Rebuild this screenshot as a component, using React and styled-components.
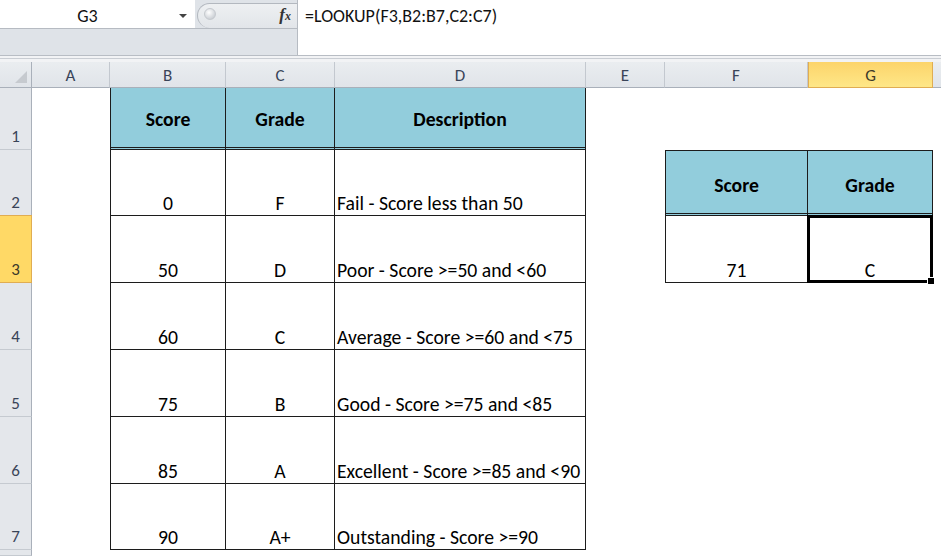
import React from "react";
import styled, { createGlobalStyle } from "styled-components";

const Global = createGlobalStyle`
  html, body { margin: 0; padding: 0; background: #fff; }
  body { font-family: "Carlito", "Lato", "Liberation Sans", sans-serif; }
`;

const FONT = `"Carlito", "Lato", "Liberation Sans", sans-serif`;

const Window = styled.div`
  width: 941px;
  height: 556px;
  overflow: hidden;
  display: flex;
  flex-direction: column;
  background: #fff;
  font-family: ${FONT};
`;

const FormulaBar = styled.div`
  display: flex;
  height: 55px;
  flex: none;
  background: #dfe3e8;
`;

const LeftPanel = styled.div`
  width: 298px;
  display: flex;
  flex-direction: column;
  border-right: 1px solid #b6bbc2;
  box-sizing: border-box;
`;

const NameRow = styled.div`
  display: flex;
  height: 29px;
  border-bottom: 1px solid #b6bbc2;
  box-sizing: border-box;
`;

const NameBox = styled.div`
  width: 195px;
  background: #fff;
  position: relative;
  display: flex;
  align-items: center;
  justify-content: center;
  font-size: 18px;
  color: #111;
  padding: 3px 20px 0 0;
  box-sizing: border-box;
`;

const DropArrow = styled.span`
  position: absolute;
  right: 8px;
  top: 14px;
  width: 0;
  height: 0;
  border-left: 4px solid transparent;
  border-right: 4px solid transparent;
  border-top: 4px solid #444;
`;

const FxArea = styled.div`
  flex: 1;
  margin: 3px 0 0 2px;
  border: 1px solid #b3b8bf;
  border-right: none;
  border-bottom: none;
  border-radius: 14px 0 0 14px;
  background: linear-gradient(#eef0f2, #e2e5e9);
  display: flex;
  align-items: center;
  justify-content: space-between;
  padding: 0 6px 0 6px;
`;

const Knob = styled.span`
  width: 10px;
  height: 10px;
  border-radius: 50%;
  margin-top: -4px;
  background: radial-gradient(circle at 40% 35%, #ffffff, #cfd3d8 70%, #b9bec5);
  border: 1px solid #c5c9ce;
`;

const Fx = styled.span`
  font-family: "Liberation Serif", "DejaVu Serif", serif;
  font-style: italic;
  font-weight: bold;
  font-size: 17px;
  color: #333;
  margin-top: -2px;
  & > small {
    font-size: 12px;
  }
`;

const GrayBand = styled.div`
  flex: 1;
`;

const FormulaInput = styled.div`
  flex: 1;
  background: #fff;
  font-size: 18px;
  color: #111;
  padding: 5px 0 0 7px;
`;

const Separator = styled.div`
  height: 7px;
  flex: none;
  background: #f2f3f5;
  border-top: 1px solid #b8bdc4;
  box-sizing: border-box;
  position: relative;
  &::after {
    content: "";
    position: absolute;
    left: 0;
    right: 0;
    top: 2px;
    height: 1px;
    background: #c9cdd3;
  }
`;

const Sheet = styled.div`
  flex: 1;
  display: grid;
  grid-template-columns: 32px 78px 116px 109px 251px 79px 143px 125px 1fr;
  grid-template-rows: 26px 62px 66px 67px 67px 67px 67px 66px 1fr;
  font-size: 19.7px;
  color: #000;
`;

const ColHead = styled.div`
  box-sizing: border-box;
  display: flex;
  align-items: center;
  justify-content: center;
  padding-top: 2px;
  font-size: 17px;
  color: ${(p) => (p.$sel ? "#3d3a2a" : "#394458")};
  background: ${(p) =>
    p.$sel
      ? "linear-gradient(#fcd46a, #fee788)"
      : "linear-gradient(#eaedf0, #e0e4e9)"};
  border-right: 1px solid ${(p) => (p.$sel ? "#e0ad52" : "#c3c8cf")};
  border-left: ${(p) => (p.$sel ? "1px solid #e0ad52" : "none")};
  border-bottom: 1px solid ${(p) => (p.$sel ? "#e0ad52" : "#a9b0ba")};
`;

const Corner = styled.div`
  box-sizing: border-box;
  background: linear-gradient(#eaedf0, #e0e4e9);
  border-right: 1px solid #a9b0ba;
  border-bottom: 1px solid #a9b0ba;
  position: relative;
  &::after {
    content: "";
    position: absolute;
    right: 4px;
    bottom: 4px;
    width: 0;
    height: 0;
    border-left: 12px solid transparent;
    border-bottom: 12px solid #c6cacf;
  }
`;

const RowHead = styled.div`
  box-sizing: border-box;
  display: flex;
  align-items: flex-end;
  justify-content: center;
  padding-bottom: 2px;
  line-height: 20px;
  font-size: 17px;
  color: ${(p) => (p.$sel ? "#3d3a2a" : "#394458")};
  background: ${(p) => (p.$sel ? "#ffd966" : "#e4e7eb")};
  border-right: 1px solid ${(p) => (p.$sel ? "#e0ad52" : "#a9b0ba")};
  border-bottom: 1px solid ${(p) => (p.$sel ? "#e0ad52" : "#c5cad0")};
  border-top: ${(p) => (p.$sel ? "1px solid #e0ad52" : "none")};
  margin-top: ${(p) => (p.$sel ? "-1px" : "0")};
`;

const LINE = "1px solid #1c1c1c";

const Cell = styled.div`
  box-sizing: border-box;
  position: relative;
  display: flex;
  align-items: ${(p) => (p.$mid ? "center" : "flex-end")};
  justify-content: ${(p) => (p.$left ? "flex-start" : "center")};
  padding: ${(p) =>
    p.$mid
      ? `${p.$pt ?? 6}px 0 0 0`
      : p.$left
      ? "0 0 1px 2px"
      : "0 0 1px 0"};
  line-height: 22px;
  white-space: nowrap;
  font-weight: ${(p) => (p.$bold ? 700 : 400)};
  background: ${(p) => (p.$fill ? "#92cddc" : "#fff")};
  border-left: ${(p) => (p.$bl ? LINE : "none")};
  border-right: ${(p) => (p.$br ? LINE : "none")};
  border-top: ${(p) => (p.$bt ? LINE : "none")};
  border-bottom: ${(p) =>
    p.$bb === "double" ? "3px double #1c1c1c" : p.$bb ? LINE : "none"};
`;

const Selection = styled.div`
  position: absolute;
  left: -1px;
  top: -1px;
  right: -1px;
  bottom: -1px;
  border: 3px solid #000;
  pointer-events: none;
  &::after {
    content: "";
    position: absolute;
    right: -5px;
    bottom: -5px;
    width: 6px;
    height: 6px;
    background: #000;
    border: 1px solid #fff;
  }
`;

const Blank = styled.div`
  background: #fff;
`;

const HBlank = styled.div`
  background: linear-gradient(#eaedf0, #e0e4e9);
  border-bottom: 1px solid #a9b0ba;
  box-sizing: border-box;
`;

const Label = styled.span`
  position: relative;
`;

const cols = ["A", "B", "C", "D", "E", "F", "G"];

const data = [
  ["0", "F", "Fail - Score less than 50"],
  ["50", "D", "Poor - Score >=50 and <60"],
  ["60", "C", "Average - Score >=60 and <75"],
  ["75", "B", "Good - Score >=75 and <85"],
  ["85", "A", "Excellent - Score >=85 and <90"],
  ["90", "A+", "Outstanding - Score >=90"],
];

function renderFG(rowIdx) {
  if (rowIdx === 1) {
    return [
      <Cell key="F" $fill $bold $mid $bl $br $bt $bb="double">
        Score
      </Cell>,
      <Cell key="G" $fill $bold $mid $br $bt $bb="double">
        Grade
      </Cell>,
    ];
  }
  if (rowIdx === 2) {
    return [
      <Cell key="F" $bl $br $bb>
        71
      </Cell>,
      <Cell key="G" $br $bb>
        <Label>C</Label>
        <Selection />
      </Cell>,
    ];
  }
  return [<Blank key="F" />, <Blank key="G" />];
}

export default function App() {
  const cells = [];
  cells.push(<Corner key="corner" />);
  cols.forEach((c) =>
    cells.push(
      <ColHead key={"h" + c} $sel={c === "G"}>
        {c}
      </ColHead>
    )
  );
  cells.push(<HBlank key="hH" />);

  cells.push(<RowHead key="r1">1</RowHead>);
  cells.push(<Blank key="r1A" />);
  cells.push(
    <Cell key="r1B" $fill $bold $mid $pt={2} $bl $br $bb="double">
      Score
    </Cell>
  );
  cells.push(
    <Cell key="r1C" $fill $bold $mid $pt={2} $br $bb="double">
      Grade
    </Cell>
  );
  cells.push(
    <Cell key="r1D" $fill $bold $mid $pt={2} $br $bb="double">
      Description
    </Cell>
  );
  cells.push(<Blank key="r1E" />);
  cells.push(<Blank key="r1F" />);
  cells.push(<Blank key="r1G" />);
  cells.push(<Blank key="r1H" />);

  data.forEach((d, i) => {
    const n = i + 2;
    cells.push(
      <RowHead key={"r" + n} $sel={n === 3}>
        {n}
      </RowHead>
    );
    cells.push(<Blank key={"r" + n + "A"} />);
    cells.push(
      <Cell key={"r" + n + "B"} $bl $br $bb>
        {d[0]}
      </Cell>
    );
    cells.push(
      <Cell key={"r" + n + "C"} $br $bb>
        {d[1]}
      </Cell>
    );
    cells.push(
      <Cell key={"r" + n + "D"} $br $bb $left>
        {d[2]}
      </Cell>
    );
    cells.push(<Blank key={"r" + n + "E"} />);
    renderFG(i + 1).forEach((el) => cells.push(el));
    cells.push(<Blank key={"r" + n + "H"} />);
  });

  cells.push(<RowHead key="r8" />);

  return (
    <>
      <Global />
      <Window>
        <FormulaBar>
          <LeftPanel>
            <NameRow>
              <NameBox>
                G3
                <DropArrow />
              </NameBox>
              <FxArea>
                <Knob />
                <Fx>
                  f<small>x</small>
                </Fx>
              </FxArea>
            </NameRow>
            <GrayBand />
          </LeftPanel>
          <FormulaInput>=LOOKUP(F3,B2:B7,C2:C7)</FormulaInput>
        </FormulaBar>
        <Separator />
        <Sheet>{cells}</Sheet>
      </Window>
    </>
  );
}
